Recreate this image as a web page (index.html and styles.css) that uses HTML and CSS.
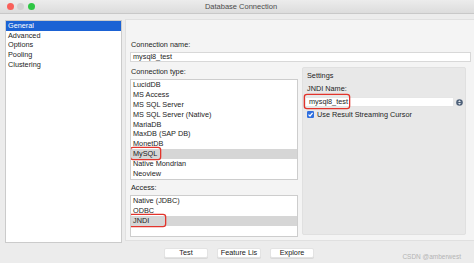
FILE: index.html
```html
<!DOCTYPE html>
<html lang="en">
  <head>
    <meta charset="UTF-8" />
    <title>Database Connection</title>
    <link rel="stylesheet" href="styles.css">
  </head>
  <body>
    <div class="window">
      <div class="titlebar">
        <div class="lights">
          <span class="light red"></span>
          <span class="light off"></span>
          <span class="light green"></span>
        </div>
        <div class="title">Database Connection</div>
        <div></div>
      </div>

      <div class="main">
        <ul class="nav">
          <li class="selected">General</li>
          <li>Advanced</li>
          <li>Options</li>
          <li>Pooling</li>
          <li>Clustering</li>
        </ul>

        <div class="content">
          <div class="label">Connection name:</div>
          <div class="field wide">mysql8_test</div>

          <div class="row">
            <div class="types">
              <div class="label">Connection type:</div>
              <ul class="list types-list">
                <li>LucidDB</li>
                <li>MS Access</li>
                <li>MS SQL Server</li>
                <li>MS SQL Server (Native)</li>
                <li>MariaDB</li>
                <li>MaxDB (SAP DB)</li>
                <li>MonetDB</li>
                <li class="active"><span class="mark">MySQL</span></li>
                <li>Native Mondrian</li>
                <li>Neoview</li>
              </ul>
              <div class="label access-label">Access:</div>
              <ul class="list access-list">
                <li>Native (JDBC)</li>
                <li>ODBC</li>
                <li class="active"><span class="mark mark-wide">JNDI</span></li>
              </ul>
            </div>

            <div class="settings">
              <div class="settings-title">Settings</div>
              <div class="settings-label">JNDI Name:</div>
              <div class="jndi-row">
                <div class="field jndi"><span class="mark mark-field">mysql8_test</span></div>
                <svg class="var-icon" width="7" height="7" viewBox="0 0 7 7">
                  <circle cx="3.5" cy="3.5" r="3.3" fill="#50627a"/>
                  <path d="M3.5 1.2 L5 3 H2 Z M3.5 5.8 L5 4 H2 Z" fill="#dfe6ee"/>
                </svg>
              </div>
              <label class="check">
                <svg class="box" width="7" height="7" viewBox="0 0 7 7">
                  <rect x="0" y="0" width="7" height="7" rx="1.3" fill="#2f6fdf"/>
                  <path d="M1.5 3.6 L3 5 L5.6 1.8" stroke="#fff" stroke-width="1.2" fill="none"/>
                </svg>
                Use Result Streaming Cursor
              </label>
            </div>
          </div>
        </div>
      </div>

      <div class="buttons">
        <button>Test</button>
        <button>Feature Lis</button>
        <button>Explore</button>
      </div>

      <div class="watermark">CSDN @amberwest</div>
    </div>
  </body>
</html>
```

FILE: styles.css
```css
body {
  margin: 0;
  padding: 0;
  background-color: #ececec;
  font-family: "Liberation Sans", Arial, sans-serif;
  font-size: 7.3px;
  color: #1d1d1d;
}
.window {
  position: relative;
  width: 474px;
  height: 263px;
  overflow: hidden;
}
.titlebar {
  display: grid;
  grid-template-columns: 1fr auto 1fr;
  align-items: center;
  height: 13px;
  background: linear-gradient(#ececec, #dcdcdc);
  border-bottom: 1px solid #c8c8c8;
}
.lights {
  display: flex;
  gap: 3.5px;
  padding-left: 6.5px;
}
.light {
  width: 7px;
  height: 7px;
  border-radius: 50%;
}
.light.red {
  background-color: #f9605a;
}
.light.off {
  background-color: #d2d2d2;
}
.light.green {
  background-color: #2ec644;
}
.title {
  color: #4b4b4b;
  font-size: 7.5px;
  padding-left: 8px;
}
.main {
  display: flex;
  gap: 3px;
  padding-top: 5px;
  padding-left: 5px;
}
.nav {
  list-style: none;
  margin: 1px 0 0 0;
  padding: 0;
  width: 117px;
  height: 223px;
  box-sizing: border-box;
  background-color: #fff;
  border: 1px solid #cbcbcb;
}
.nav li {
  line-height: 9.7px;
  padding-left: 2px;
}
.nav li.selected {
  background-color: #1b62d4;
  color: #fff;
}
.content {
  flex: 1;
  height: 222px;
  box-sizing: border-box;
  background-color: #f4f4f4;
  border: 1px solid #e0e0e0;
  border-right: none;
  padding: 20px 3px 0 4px;
}
.label {
  line-height: 10px;
  padding-left: 1px;
}
.field {
  background-color: #fff;
  border: 1px solid #d8d8d8;
  box-sizing: border-box;
  height: 10px;
  line-height: 8px;
  padding-left: 2px;
}
.field.wide {
  margin-top: 2px;
}
.row {
  display: flex;
  gap: 4px;
  margin-top: 5px;
}
.types {
  width: 168px;
}
.list {
  list-style: none;
  margin: 2px 0 0 0;
  padding: 0;
  background-color: #fff;
  border: 1px solid #cdcdcd;
  box-sizing: border-box;
  overflow: hidden;
}
.list li {
  line-height: 9.9px;
  height: 9.9px;
  padding-left: 2px;
}
.list li.active {
  background-color: #d6d6d6;
}
.types-list {
  height: 101px;
}
.access-label {
  margin-top: 3px;
}
.access-list {
  height: 42px;
}
.mark {
  padding: 1px 2.5px;
  margin: 0 -2.5px;
  border-radius: 2px;
  box-shadow: 0 0 0 1.3px #e2342c;
}
.mark-wide {
  padding-right: 16px;
  margin-left: -3.5px;
  padding-left: 3.5px;
}
.mark-field {
  padding: 2px 1px 2px 4px;
  margin: 0 0 0 -4px;
}
.settings {
  width: 164px;
  height: 168px;
  box-sizing: border-box;
  background-color: #e8e8e8;
  border: 1px solid #e0e0e0;
  border-radius: 2px;
  padding: 3px 5px 0 4px;
}
.settings-title {
  line-height: 10px;
}
.settings-label {
  line-height: 10px;
  margin-top: 3px;
}
.jndi-row {
  display: flex;
  align-items: center;
  gap: 2px;
  margin: 3px -3px 0 -2px;
}
.field.jndi {
  flex: 1;
  border-color: #e6e6e6;
  padding-left: 3px;
}
.var-icon {
  display: block;
}
.check {
  display: flex;
  align-items: center;
  gap: 3px;
  margin-top: 3px;
  line-height: 9px;
}
.check .box {
  display: block;
}
.buttons {
  display: flex;
  justify-content: center;
  gap: 9px;
  margin-top: 5px;
  padding-left: 4px;
}
.buttons button {
  width: 44px;
  height: 10px;
  padding: 0;
  font-family: "Liberation Sans", Arial, sans-serif;
  font-size: 7.3px;
  line-height: 8px;
  color: #222;
  background-color: #fff;
  border: 1px solid #e3e3e3;
  border-radius: 2px;
  box-shadow: 0 1px 0 #d9d9d9;
}
.watermark {
  position: absolute;
  right: 13px;
  bottom: 3px;
  font-size: 6.5px;
  color: #b4b4b4;
}
```
